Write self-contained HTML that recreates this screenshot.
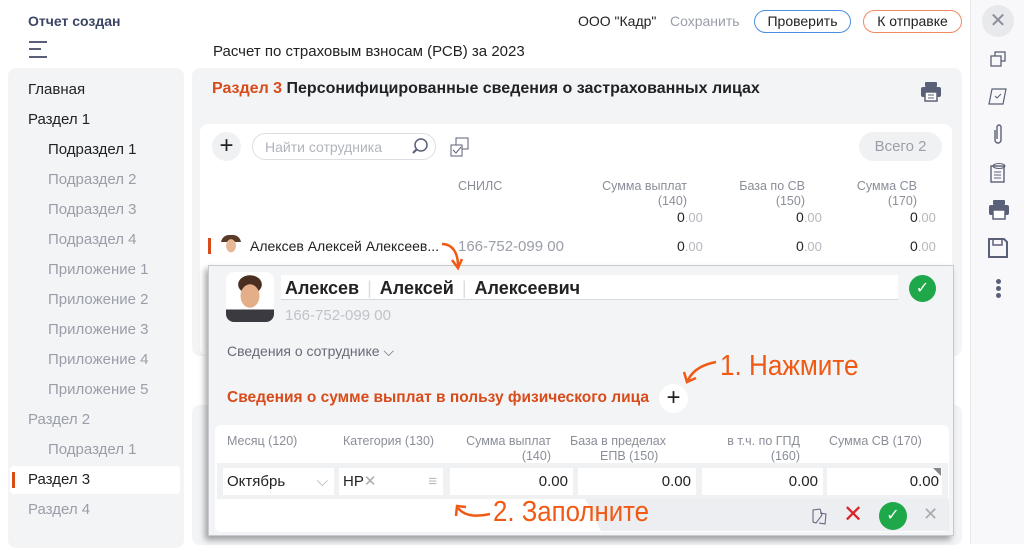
<!DOCTYPE html>
<html><head><meta charset="utf-8">
<style>
*{box-sizing:border-box;margin:0;padding:0}
body{width:1024px;height:544px;overflow:hidden;background:#fff;font-family:"Liberation Sans",sans-serif;position:relative;color:#222}
.a{position:absolute;white-space:nowrap}
.side{position:absolute;left:8px;top:68px;width:176px;height:480px;background:#f3f4f6;border-radius:8px}
.si{position:absolute;font-size:15px;color:#222}
.sub{left:40px}
.g{color:#9a9ea8}
.rail{position:absolute;left:970px;top:0;width:54px;height:544px;background:#f8f8fa;border-left:1px solid #e6e7ea}
.btn{position:absolute;height:23px;border-radius:12px;font-size:15px;line-height:21px;text-align:center}
.num{font-size:14px;color:#222}.num span{color:#b5b8bf;font-size:13px}
.hdr{font-size:12.5px;color:#8a8e98;text-align:right;line-height:15px}
.inp{position:absolute;top:468px;height:27px;background:#fff;font-size:15px;line-height:27px}
.face{border-radius:8px;background:radial-gradient(ellipse 40% 45% at 50% 45%,#e8b895 60%,transparent 62%),linear-gradient(#5a3a28 0 30%,#fff 30%);}
</style></head><body>
<div class="a" style="left:28px;top:13px;font-size:14px;font-weight:bold;color:#3c4563">Отчет создан</div>
<div class="a" style="left:29px;top:41px;width:18px;height:2px;background:#5a6078"></div>
<div class="a" style="left:29px;top:48px;width:12px;height:2px;background:#5a6078"></div>
<div class="a" style="left:29px;top:56px;width:18px;height:2px;background:#5a6078"></div>
<div class="a" style="left:213px;top:43px;font-size:15px">Расчет по страховым взносам (РСВ) за 2023</div>
<div class="a" style="left:578px;top:13px;font-size:14px">ООО "Кадр"</div>
<div class="a" style="left:670px;top:13px;font-size:14px;color:#9a9ea8">Сохранить</div>
<div class="btn" style="left:754px;top:10px;width:97px;border:1px solid #4a8fe0;font-size:14px">Проверить</div>
<div class="btn" style="left:863px;top:10px;width:99px;border:1px solid #f08a60;font-size:14px">К отправке</div>

<div class="side">
<div class="si" style="left:20px;top:13px">Главная</div>
<div class="si" style="left:20px;top:43px">Раздел 1</div>
<div class="si sub" style="top:73px">Подраздел 1</div>
<div class="si sub g" style="top:103px">Подраздел 2</div>
<div class="si sub g" style="top:133px">Подраздел 3</div>
<div class="si sub g" style="top:163px">Подраздел 4</div>
<div class="si sub g" style="top:193px">Приложение 1</div>
<div class="si sub g" style="top:223px">Приложение 2</div>
<div class="si sub g" style="top:253px">Приложение 3</div>
<div class="si sub g" style="top:283px">Приложение 4</div>
<div class="si sub g" style="top:313px">Приложение 5</div>
<div class="si g" style="left:20px;top:343px">Раздел 2</div>
<div class="si sub g" style="top:373px">Подраздел 1</div>
<div style="position:absolute;left:2px;top:398px;width:170px;height:28px;background:#fff;border-radius:4px"></div>
<div style="position:absolute;left:4px;top:404px;width:3px;height:16px;background:#d84b1a"></div>
<div class="si" style="left:20px;top:403px">Раздел 3</div>
<div class="si g" style="left:20px;top:433px">Раздел 4</div>
</div>

<div class="a" style="left:192px;top:68px;width:770px;height:288px;background:#f3f4f6;border-radius:8px"></div>
<div class="a" style="left:192px;top:405px;width:770px;height:140px;background:#f3f4f6;border-radius:8px"></div>
<div class="a" style="left:212px;top:80px;font-size:16px;font-weight:bold"><span style="color:#d84b1a">Раздел 3</span> Персонифицированные сведения о застрахованных лицах</div>
<svg class="a" style="left:920px;top:82px" width="22" height="20" viewBox="0 0 22 20"><rect x="5" y="0" width="12" height="5" rx="1" fill="#5a6078"/><rect x="1" y="5" width="20" height="10" rx="2" fill="#5a6078"/><rect x="5" y="10" width="12" height="9" fill="#fff" stroke="#5a6078" stroke-width="1.5"/><line x1="8" y1="13" x2="14" y2="13" stroke="#5a6078"/><line x1="8" y1="16" x2="14" y2="16" stroke="#5a6078"/></svg>
<div class="a" style="left:200px;top:124px;width:752px;height:232px;background:#fff;border-radius:8px"></div>
<div class="a" style="left:212px;top:132px;width:29px;height:29px;border-radius:50%;background:#f0f1f3;font-size:24px;line-height:27px;text-align:center">+</div>
<div class="a" style="left:252px;top:133px;width:184px;height:27px;border:1px solid #dcdee3;border-radius:14px;font-size:14px;color:#b0b4bb;padding:5px 0 0 12px">Найти сотрудника</div>
<svg class="a" style="left:411px;top:137px" width="18" height="18"><circle cx="10" cy="8" r="6" fill="none" stroke="#5a6078" stroke-width="1.5"/><line x1="6" y1="12" x2="2" y2="16" stroke="#5a6078" stroke-width="2"/></svg>
<svg class="a" style="left:449px;top:137px" width="22" height="22"><rect x="7" y="1" width="12" height="11" fill="none" stroke="#5a6078"/><rect x="2" y="8" width="11" height="11" fill="#fff" stroke="#5a6078"/><path d="M4 13l3 3 5-6" fill="none" stroke="#5a6078"/></svg>
<div class="a" style="left:859px;top:132px;width:83px;height:29px;border-radius:15px;background:#f0f1f3;color:#9a9ea8;font-size:15px;line-height:29px;text-align:center">Всего 2</div>
<div class="a hdr" style="left:458px;top:179px;text-align:left">СНИЛС</div>
<div class="a hdr" style="left:560px;top:179px;width:127px">Сумма выплат<br>(140)</div>
<div class="a hdr" style="left:690px;top:179px;width:115px">База по СВ<br>(150)</div>
<div class="a hdr" style="left:800px;top:179px;width:117px">Сумма СВ<br>(170)</div>
<div class="a num" style="left:677px;top:209px">0<span>.00</span></div>
<div class="a num" style="left:796px;top:209px">0<span>.00</span></div>
<div class="a num" style="left:910px;top:209px">0<span>.00</span></div>
<div class="a" style="left:208px;top:238px;width:3px;height:16px;background:#d84b1a"></div>
<div class="a face" style="left:221px;top:235px;width:20px;height:24px"></div>
<div class="a" style="left:250px;top:238px;font-size:14px">Алексев Алексей Алексеев...</div>
<div class="a" style="left:458px;top:238px;font-size:15px;color:#9a9ea8">166-752-099 00</div>
<div class="a num" style="left:677px;top:238px">0<span>.00</span></div>
<div class="a num" style="left:796px;top:238px">0<span>.00</span></div>
<div class="a num" style="left:910px;top:238px">0<span>.00</span></div>

<div class="rail">
<div class="a" style="left:11px;top:5px;width:32px;height:32px;border-radius:50%;background:#e8e9ec;color:#8a8e98;font-size:20px;line-height:32px;text-align:center">✕</div>
<svg class="a" style="left:18px;top:50px" width="18" height="20"><rect x="6" y="2" width="10" height="9" fill="none" stroke="#5a6078" stroke-width="1.3"/><rect x="2" y="6" width="10" height="10" fill="#f8f8fa" stroke="#5a6078" stroke-width="1.3"/></svg>
<svg class="a" style="left:16px;top:86px" width="22" height="22"><path d="M5 3h14l-3 15H2z" fill="none" stroke="#5a6078" stroke-width="1.2"/><path d="M8 10l2 2 4-4" fill="none" stroke="#5a6078"/></svg>
<svg class="a" style="left:20px;top:122px" width="14" height="24"><path d="M4 8v10a3 3 0 006 0V5a2 2 0 00-4 0v12" fill="none" stroke="#5a6078" stroke-width="1.4"/></svg>
<svg class="a" style="left:17px;top:162px" width="20" height="22"><rect x="3" y="4" width="13" height="16" fill="none" stroke="#5a6078" stroke-width="1.4"/><line x1="6" y1="10" x2="13" y2="10" stroke="#5a6078"/><line x1="6" y1="13" x2="13" y2="13" stroke="#5a6078"/><line x1="6" y1="16" x2="13" y2="16" stroke="#5a6078"/><ellipse cx="11" cy="4" rx="6" ry="2.5" fill="none" stroke="#5a6078"/></svg>
<svg class="a" style="left:17px;top:200px" width="22" height="20" viewBox="0 0 22 20"><rect x="5" y="0" width="12" height="5" rx="1" fill="#5a6078"/><rect x="1" y="5" width="20" height="10" rx="2" fill="#5a6078"/><rect x="5" y="10" width="12" height="9" fill="#fff" stroke="#5a6078" stroke-width="1.5"/></svg>
<svg class="a" style="left:17px;top:238px" width="20" height="20"><path d="M1 1h15l3 3v15H1z" fill="none" stroke="#5a6078" stroke-width="2"/><rect x="5" y="1" width="9" height="6" fill="none" stroke="#5a6078" stroke-width="1.5"/></svg>
<div class="a" style="left:25px;top:279px;width:5px;height:5px;border-radius:50%;background:#5a6078"></div>
<div class="a" style="left:25px;top:286px;width:5px;height:5px;border-radius:50%;background:#5a6078"></div>
<div class="a" style="left:25px;top:293px;width:5px;height:5px;border-radius:50%;background:#5a6078"></div>
</div>

<!-- popup -->
<div class="a" style="left:208px;top:265px;width:746px;height:271px;background:#f3f4f6;border:1px solid #c8cad0;box-shadow:-3px 4px 6px rgba(0,0,0,.35)"></div>
<div class="a face" style="left:226px;top:272px;width:48px;height:50px;background:radial-gradient(ellipse 32% 38% at 50% 48%,#e3ae88 60%,transparent 63%),radial-gradient(ellipse 40% 30% at 50% 25%,#4a2e20 60%,transparent 63%),linear-gradient(#fff 75%,#3a3a40 75%)"></div>
<div class="a" style="left:281px;top:275px;width:617px;height:25px;background:#fff;border-bottom:1px solid #d5d7dc;font-size:18px;font-weight:bold;line-height:26px;padding-left:4px">Алексев<span style="color:#ddd;font-weight:normal;margin:0 8px">|</span>Алексей<span style="color:#ddd;font-weight:normal;margin:0 8px">|</span>Алексеевич</div>
<div class="a" style="left:909px;top:275px;width:27px;height:27px;border-radius:50%;background:#1ea84a;color:#fff;font-size:16px;line-height:27px;text-align:center">✓</div>
<div class="a" style="left:285px;top:307px;font-size:15px;color:#c0c3c9">166-752-099 00</div>
<div class="a" style="left:227px;top:343px;font-size:14px;color:#666a75">Сведения о сотруднике ⌵</div>
<div class="a" style="left:227px;top:389px;font-size:15.5px;font-weight:bold;color:#d84b1a">Сведения о сумме выплат в пользу физического лица</div>
<div class="a" style="left:659px;top:384px;width:29px;height:29px;border-radius:50%;background:#fff;font-size:24px;line-height:28px;text-align:center">+</div>
<div class="a" style="left:215px;top:425px;width:734px;height:107px;background:#fff;border-radius:6px"></div>
<div class="a hdr" style="left:227px;top:434px;text-align:left">Месяц (120)</div>
<div class="a hdr" style="left:343px;top:434px;text-align:left">Категория (130)</div>
<div class="a hdr" style="left:450px;top:434px;width:101px">Сумма выплат<br>(140)</div>
<div class="a hdr" style="left:570px;top:434px;width:106px;text-align:left">База в пределах<br><span style="margin-left:30px">ЕПВ (150)</span></div>
<div class="a hdr" style="left:700px;top:434px;width:100px">в т.ч. по ГПД<br>(160)</div>
<div class="a hdr" style="left:829px;top:434px;text-align:left">Сумма СВ (170)</div>
<div class="a" style="left:217px;top:463px;width:731px;height:36px;background:#f0f1f3"></div>
<div class="inp" style="left:223px;width:111px;padding-left:4px">Октябрь<span style="position:absolute;right:6px;color:#aaa">⌵</span></div>
<div class="inp" style="left:339px;width:104px;padding-left:4px">НР<span style="color:#aaa">✕</span><span style="position:absolute;right:6px;color:#bbb">≡</span></div>
<div class="inp" style="left:450px;width:123px;text-align:right;padding-right:5px">0.00</div>
<div class="inp" style="left:578px;width:118px;text-align:right;padding-right:5px">0.00</div>
<div class="inp" style="left:702px;width:121px;text-align:right;padding-right:5px">0.00</div>
<div class="inp" style="left:827px;width:115px;text-align:right;padding-right:3px">0.00</div>
<div class="a" style="left:933px;top:468px;width:0;height:0;border-top:8px solid #888;border-left:8px solid transparent"></div>
<svg class="a" style="left:585px;top:499px" width="364" height="32"><path d="M0 0H364V32H16z" fill="#eceef1"/></svg>
<svg class="a" style="left:810px;top:506px" width="20" height="20"><path d="M3 4l7-1 2 6-6 8-3-1z" fill="none" stroke="#5a6078"/><path d="M10 7l6 1-1 10-6-1" fill="none" stroke="#5a6078"/></svg>
<div class="a" style="left:843px;top:499px;color:#d8262b;font-size:24px;line-height:32px">✕</div>
<div class="a" style="left:879px;top:502px;width:28px;height:28px;border-radius:50%;background:#1ea84a;color:#fff;font-size:16px;line-height:28px;text-align:center">✓</div>
<div class="a" style="left:923px;top:504px;color:#aaa;font-size:18px">✕</div>

<!-- annotations -->
<svg class="a" style="left:440px;top:238px" width="30" height="34"><path d="M2 6c10 0 16 8 16 22" fill="none" stroke="#f05a14" stroke-width="2.5"/><path d="M12 22l6 8 4-9" fill="none" stroke="#f05a14" stroke-width="2.5"/></svg>
<svg class="a" style="left:680px;top:358px" width="40" height="30"><path d="M36 4C26 6 14 10 8 22" fill="none" stroke="#f05a14" stroke-width="2.5"/><path d="M4 14l3 10 9-4" fill="none" stroke="#f05a14" stroke-width="2.5"/></svg>
<div class="a" style="left:720px;top:350px;font-size:29px;color:#f05a14;transform:scaleX(.9);transform-origin:left">1. Нажмите</div>
<svg class="a" style="left:452px;top:502px" width="40" height="20"><path d="M38 12C28 14 14 16 6 6" fill="none" stroke="#f05a14" stroke-width="2.5"/><path d="M4 14l1-10 9 1" fill="none" stroke="#f05a14" stroke-width="2.5"/></svg>
<div class="a" style="left:493px;top:496px;font-size:29px;color:#f05a14;transform:scaleX(.89);transform-origin:left">2. Заполните</div>
</body></html>
